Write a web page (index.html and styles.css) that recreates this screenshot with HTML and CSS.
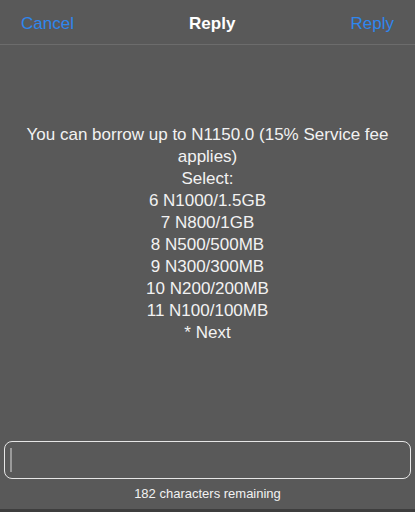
FILE: index.html
```html
<!DOCTYPE html>
<html>
	<head>
        <title>Reply</title>
        <meta charset="utf-8">
        <link rel="stylesheet" href="styles.css">
	</head>
	<body>
        <div id="tela">
            <div class="topo">
                <span class="botao">Cancel</span>
                <span class="titulo">Reply</span>
                <span class="botao">Reply</span>
            </div>
            <div class="mensagem">
                <p>You can borrow up to N1150.0 (15% Service fee applies)</p>
                <p>Select:</p>
                <p>6 N1000/1.5GB</p>
                <p>7 N800/1GB</p>
                <p>8 N500/500MB</p>
                <p>9 N300/300MB</p>
                <p>10 N200/200MB</p>
                <p>11 N100/100MB</p>
                <p>* Next</p>
            </div>
            <div class="resposta">
                <div class="caixa"><span class="cursor"></span></div>
                <div class="restante">182 characters remaining</div>
            </div>
            <div class="rodape"></div>
        </div>
	</body>
</html>
```

FILE: styles.css
```css
body{
    margin: 0;
    background-color: #595959;
    font-family: "Liberation Sans", Arial, sans-serif;
}
#tela{
    width: 415px;
    height: 512px;
    display: flex;
    flex-direction: column;
    background-color: #595959;
    color: #f2f2f2;
}
.topo{
    height: 45px;
    border-bottom: 1px solid #6c6c6c;
    display: flex;
    justify-content: space-between;
    align-items: center;
    padding: 3px 21px 0 21px;
    box-sizing: border-box;
    font-size: 17px;
}
.botao{
    color: #2f86ee;
}
.titulo{
    font-weight: bold;
    color: #ffffff;
}
.mensagem{
    flex: 1;
    padding: 79px 24px 0 24px;
    text-align: center;
    font-size: 17px;
    line-height: 22px;
}
.mensagem p{
    margin: 0;
}
.resposta{
    padding: 0 4px;
}
.caixa{
    height: 38px;
    border: 1.5px solid #e6e6e6;
    border-radius: 8px;
    box-sizing: border-box;
    display: flex;
    align-items: center;
    padding-left: 5px;
}
.cursor{
    width: 2px;
    height: 24px;
    background-color: #9a9a9a;
}
.restante{
    text-align: center;
    font-size: 13px;
    line-height: 16px;
    padding: 7px 0 7px 0;
}
.rodape{
    height: 3px;
    background-color: #3e3e3e;
}
```
